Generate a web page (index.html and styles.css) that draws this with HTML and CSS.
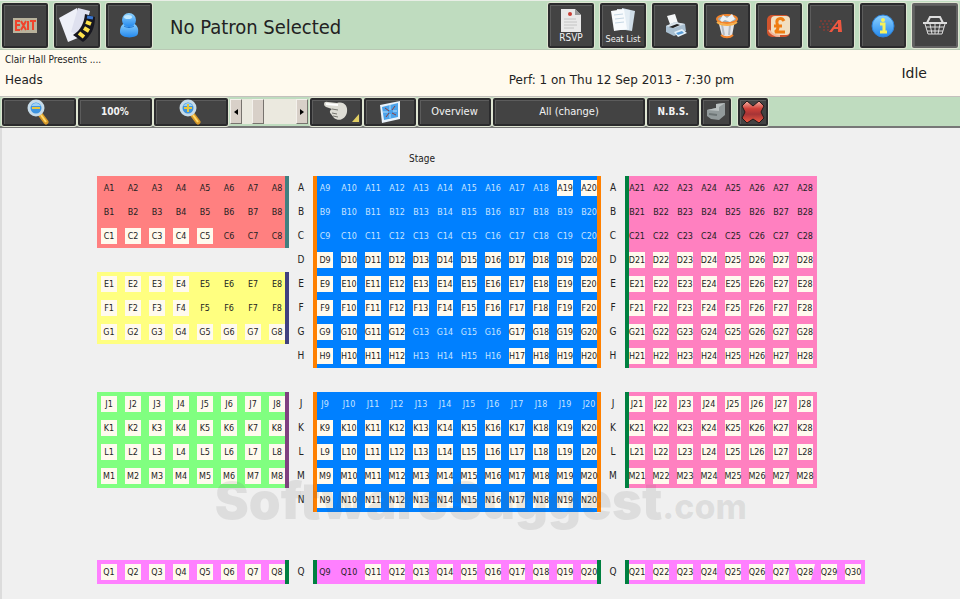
FILE: index.html
```html
<!DOCTYPE html>
<html lang="en">
<head>
    <meta charset="UTF-8">
    <title>Box Office - Seat Plan</title>
    <meta name="viewport" content="width=device-width, initial-scale=1.0">
    <link rel="stylesheet" href="styles.css">
</head>
<body>
    <header class="topbar">
        <button class="btn big" aria-label="Exit">
            <svg width="26" height="18" viewBox="0 0 26 18"><rect x="1" y="1" width="24" height="15" fill="#b9b39c"/><path d="M3 4h5M4 4v9h4M4 8h4M9 4l5 9M14 4l-5 9M16 4v9M18 4h6M21 4v9" stroke="#f0442c" stroke-width="2" fill="none"/></svg>
        </button>
        <button class="btn big" aria-label="Events">
            <svg width="40" height="38" viewBox="0 0 40 38"><path d="M2 11L20 1l8 27-17 7z" fill="#eef0f8"/><path d="M21 1l12 3-7 25-12-4z" fill="#dfe1ef"/><path d="M28 7l10 3c0 11-4 19-12 25l-10-7c8-5 11-12 12-21z" fill="#171720"/><path d="M30 10l6 1" stroke="#3975cf" stroke-width="3"/><path d="M29 15l5 2M27 21l5 3M22 26l5 4" stroke="#ffe34b" stroke-width="4"/></svg>
        </button>
        <button class="btn big" aria-label="Patron">
            <svg width="22" height="28" viewBox="0 0 22 28"><defs><linearGradient id="blue" x2="0" y2="1"><stop stop-color="#8ed3ff"/><stop offset="1" stop-color="#2388ed"/></linearGradient></defs><path d="M2 20c0-5 2-8 5-9h8c4 2 6 5 5 10 0 6-18 6-18-1z" fill="url(#blue)"/><circle cx="11" cy="8" r="7" fill="url(#blue)"/><path d="M6 14c3 2 7 2 10 0" stroke="#1c72d0" fill="none"/><ellipse cx="10" cy="5" rx="4" ry="2" fill="#c0e8ff"/></svg>
        </button>
        <h1 class="patron">No Patron Selected</h1>
        <button class="btn big labelled">
            <svg width="22" height="24" viewBox="0 0 22 24"><path d="M1 1h14l6 6v17H1z" fill="#e9e9e9"/><path d="M15 1v6h6z" fill="#999"/><path d="M4 11h12M4 14h13M4 17h13M4 20h10" stroke="#c4c4c4"/><circle cx="10" cy="6" r="2" fill="#c93e35"/></svg>
            <span>RSVP</span>
        </button>
        <button class="btn big labelled small-text">
            <svg width="28" height="26" viewBox="0 0 28 26"><path d="M13 1l13 3-3 20-13-2z" fill="#cfdde8"/><path d="M8 2l13 1-1 20H7z" fill="#e3edf4"/><path d="M2 4l13-2 3 20-13 2z" fill="#f8fbfd"/><path d="M5 8l9-1M6 12l9-1M6 16l9-1" stroke="#c5d7e4"/></svg>
            <span>Seat List</span>
        </button>
        <button class="btn big" aria-label="Print">
            <svg width="26" height="26" viewBox="0 0 26 26"><path d="M5 3l8-2 3 9-7 4z" fill="#f5f7f8"/><path d="M4 13l9-4 10 2 1 7-12 5-8-4z" fill="#a9bfd0"/><path d="M4 13l9-4 10 2-11 4z" fill="#d9e3ea"/><path d="M7 14l8-3 3 1-7 3z" fill="#222"/><path d="M12 19l8-3 5 4-9 4z" fill="#e5f2fa"/><path d="M14 20l6-2 2 2-6 2z" fill="#5a9cd6"/></svg>
        </button>
        <button class="btn big" aria-label="Waste bin">
            <svg width="24" height="26" viewBox="0 0 24 26"><path d="M3 7h17l-3 16q-5 3-10 0z" fill="#e4e6ea"/><path d="M7 12l2 10M15 12l-1 10" stroke="#b4bbc3" stroke-width="2"/><ellipse cx="12" cy="6" rx="10" ry="4" fill="#9fb0ba" stroke="#f2842c" stroke-width="2"/><path d="M5 7l3-5 4 3 5-4 3 5-5 3-5-2-3 2z" fill="#edf1f4"/><path d="M2 9c5 4 15 4 20 0" fill="none" stroke="#f8b04a" stroke-width="2"/><path d="M6 22c3 3 9 3 12 0" fill="none" stroke="#f2842c" stroke-width="2"/></svg>
        </button>
        <button class="btn big" aria-label="Payment">
            <svg width="26" height="26" viewBox="0 0 26 26"><rect x="1" y="2" width="23" height="22" rx="5" fill="#d2542c"/><rect x="5" y="3" width="19" height="19" rx="4" fill="#f1dfc0"/><path d="M3 17c2 4 6 6 11 6" fill="none" stroke="#f0b79b" stroke-width="2"/><path d="M18 8c-2-4-8-3-7 2l1 4c0 3-1 4-3 5h10M8 13h8" fill="none" stroke="#ef7d10" stroke-width="3"/></svg>
        </button>
        <button class="btn big" aria-label="Allocate">
            <svg width="26" height="18" viewBox="0 0 26 18"><path d="M11 15L20 3h3l1 12h-4v-3h-4l-2 3zM17 10h3V6z" fill="#ee5740" fill-rule="evenodd"/><path d="M2 4h15M4 7h11M1 10h12M5 13h6" stroke="#a7382e" stroke-dasharray="2 2"/></svg>
        </button>
        <button class="btn big" aria-label="Information">
            <svg width="24" height="24" viewBox="0 0 24 24"><circle cx="12" cy="12" r="11" fill="url(#blue)" stroke="#2e83d8"/><circle cx="12" cy="6" r="2" fill="#f7f15b"/><path d="M9 10h4v8M9 18h7" stroke="#f7f15b" stroke-width="3" fill="none"/></svg>
        </button>
        <button class="btn big raised" aria-label="Basket">
            <svg width="28" height="22" viewBox="0 0 28 22"><path d="M6 8l3-6h10l3 6" fill="none" stroke="#ddd" stroke-width="2"/><path d="M2 8h24" stroke="#ddd" stroke-width="2"/><path d="M4 9l3 10h14l3-10M5 12h18M6 16h16M9 9l2 10M14 9v10M19 9l-2 10" fill="none" stroke="#ddd"/></svg>
        </button>
    </header>

    <section class="info">
        <div class="event">
            <div class="presents">Clair Hall Presents ....</div>
            <div>Heads</div>
        </div>
        <div class="perf">Perf: 1 on Thu 12 Sep 2013 - 7:30 pm</div>
        <div class="status">Idle</div>
    </section>

    <nav class="toolbar">
        <button class="btn zoom" aria-label="Zoom out">
            <svg width="26" height="26" viewBox="0 0 26 26"><path d="M14 15l6 8" stroke="#d99a28" stroke-width="5" stroke-linecap="round"/><path d="M15 16l5 7" stroke="#ffd967" stroke-width="2"/><circle cx="10" cy="9" r="7" fill="#3e94e0" stroke="#c6dbe8" stroke-width="3"/><path d="M5 7c3-4 7-4 10 0" fill="#9dd0f5"/><path d="M6 9h8" stroke="#e6c63d" stroke-width="2"/></svg>
        </button>
        <button class="btn zoom"><span class="bold">100%</span></button>
        <button class="btn zoom" aria-label="Zoom in">
            <svg width="26" height="26" viewBox="0 0 26 26"><path d="M14 15l6 8" stroke="#d99a28" stroke-width="5" stroke-linecap="round"/><path d="M15 16l5 7" stroke="#ffd967" stroke-width="2"/><circle cx="10" cy="9" r="7" fill="#3e94e0" stroke="#c6dbe8" stroke-width="3"/><path d="M5 7c3-4 7-4 10 0" fill="#9dd0f5"/><path d="M6 9h8M10 5v8" stroke="#e6c63d" stroke-width="2"/></svg>
        </button>
        <div class="scroller">
            <button class="arrow" aria-label="Smaller"><svg width="4" height="6" viewBox="0 0 4 6"><path d="M4 0v6L0 3z"/></svg></button>
            <input type="range" min="0" max="100" value="23" aria-label="Zoom level">
            <button class="arrow" aria-label="Larger"><svg width="4" height="6" viewBox="0 0 4 6"><path d="M0 0v6l4-3z"/></svg></button>
        </div>
        <button class="btn tool" aria-label="Select seats">
            <svg width="48" height="24" viewBox="0 0 48 24"><path d="M12 4q0-3 4-2l9 1c7-2 11 3 10 9-1 7-8 10-13 6l-3-4c-2-2-1-4 1-5l-6-2q-2-1-2-3z" fill="#deddd5"/><path d="M20 9l6 1M20 13l5 1M21 16l5 1" stroke="#76756f" stroke-width="1"/><path d="M14 4l12 1" stroke="#fff" stroke-width="2"/><path d="M47 14v8h-7z" fill="#e2cf63"/></svg>
        </button>
        <button class="btn tool" aria-label="Fit to window">
            <svg width="24" height="24" viewBox="0 0 24 24"><path d="M2 5l20-4v18L4 23z" fill="#eaf3fb"/><path d="M4 7l16-4v14L6 20z" fill="#4ba2ea"/><path d="M7 8l4 3M17 6l-3 4M8 17l3-4M18 15l-4-2" stroke="#923d3b" stroke-width="1"/><path d="M12 5v5M12 14v4M5 12h5M15 11h4" stroke="#b9defa" stroke-width="1"/></svg>
        </button>
        <button class="btn overview">Overview</button>
        <button class="btn area">All (change)</button>
        <button class="btn tool"><span class="bold">N.B.S.</span></button>
        <button class="btn square" aria-label="Best seats">
            <svg width="20" height="20" viewBox="0 0 20 20"><path d="M1 8l9-2V2l9-1v12l-6 5-8-1-4-3z" fill="#929a9b"/><path d="M1 8l9-2V2l9-1-6 4v4z" fill="#bac0c0"/><path d="M3 12l8 1" stroke="#6d7576" stroke-width="2"/></svg>
        </button>
        <button class="btn square cancel" aria-label="Cancel">
            <svg width="24" height="24" viewBox="0 0 24 24"><defs><linearGradient id="red" x2="0" y2="1"><stop stop-color="#f8b4a6"/><stop offset=".35" stop-color="#cf4038"/><stop offset=".6" stop-color="#a63436"/><stop offset="1" stop-color="#f15b42"/></linearGradient></defs><path d="M6 1l6 5 6-5 5 5-3 6 3 6-5 5-6-4-6 4-5-5 3-6-3-6z" fill="url(#red)" stroke="#241818"/></svg>
        </button>
    </nav>

    <main class="plan">
        <div class="seats" id="seats">
            <div class="stage">Stage</div>
        </div>
        <div class="watermark">SoftwareSuggest<span>.com</span></div>
    </main>
    <script src="seats.js"></script>
</body>
</html>
```

FILE: styles.css
```css
body {
    background: #f0f0f0;
    color: #222;
    font-family: 'DejaVu Sans Condensed', 'DejaVu Sans', Verdana, sans-serif;
    margin: 0;
    min-height: 100vh;
    display: flex;
    flex-direction: column;
}
button {
    font-family: inherit;
    padding: 0;
    cursor: pointer;
}
svg {
    display: block;
}

/* header */
.topbar {
    display: flex;
    align-items: flex-start;
    gap: 6px;
    height: 46px;
    padding: 2px 2px 0 2px;
    background: #bfdcbf;
    border-top: 1px solid #e8eee6;
}
.patron {
    flex: 1;
    margin: 0 0 0 12px;
    font-size: 20px;
    line-height: 48px;
    font-weight: normal;
    white-space: nowrap;
}
.btn {
    display: flex;
    align-items: center;
    justify-content: center;
    box-sizing: border-box;
    background: #434343;
    color: #f2f2f2;
    border: 2px solid #2b2b2d;
    border-radius: 2px;
    font-size: 11px;
    box-shadow: 0 0 0 1px #dfe5d2, inset 1px 1px 0 #5c5c5c;
}
.btn:active {
    background: #333;
}
.big {
    width: 46px;
    height: 45px;
    flex-shrink: 0;
}
.labelled {
    flex-direction: column;
    font-size: 10px;
    line-height: 12px;
}
.small-text {
    font-size: 9px;
}
.raised {
    border-color: #626262;
}

/* performance details */
.info {
    display: grid;
    grid-template-columns: 53% auto 1fr;
    height: 46px;
    background: #fffaee;
    border-top: 1px solid #b9c9b4;
    border-bottom: 1px solid #c4c0bd;
    font-family: 'DejaVu Sans', Verdana, sans-serif;
    font-size: 12px;
    line-height: 20px;
}
.event {
    padding-left: 5px;
}
.presents {
    font-family: 'DejaVu Sans Condensed', 'DejaVu Sans', sans-serif;
    font-size: 10px;
}
.perf {
    padding-top: 20px;
}
.status {
    text-align: right;
    font-size: 14px;
    line-height: 46px;
    padding-right: 33px;
}

/* tools */
.toolbar {
    display: flex;
    align-items: center;
    gap: 2px;
    height: 29px;
    padding: 0 2px;
    background: #bfdcbf;
    border-bottom: 2px solid #777;
}
.toolbar .btn {
    height: 28px;
    flex-shrink: 0;
}
.zoom {
    width: 74px;
}
.tool {
    width: 52px;
}
.overview {
    width: 73px;
}
.area {
    width: 152px;
}
.toolbar .square {
    width: 30px;
}
.toolbar .cancel {
    margin-left: 5px;
}
.bold {
    font-weight: bold;
    font-size: 10px;
}
.scroller {
    display: flex;
    width: 78px;
    height: 25px;
    flex-shrink: 0;
    background: #ebe9df;
}
.arrow {
    display: flex;
    align-items: center;
    justify-content: center;
    width: 12px;
    background: #d8d0c8;
    border: 1px solid #77736e;
    border-top-color: #f4f1ec;
    border-left-color: #f4f1ec;
}
.scroller input {
    appearance: none;
    flex: 1;
    min-width: 0;
    margin: 0;
    background: transparent;
}
.scroller input::-webkit-slider-thumb {
    appearance: none;
    width: 12px;
    height: 25px;
    background: #d8d0c8;
    border: 1px solid #77736e;
    border-top-color: #f4f1ec;
    border-left-color: #f4f1ec;
}

/* seating plan */
.plan {
    position: relative;
    flex: 1;
    border-left: 2px solid #dcdcdc;
    padding-top: 24px;
}
.seats {
    display: grid;
    grid-template-columns: repeat(32, 24px);
    grid-auto-rows: 24px;
    justify-content: center;
}
.stage {
    grid-area: 1 / 14 / 2 / 17;
    font-size: 10px;
    line-height: 14px;
}
.row-name {
    font-size: 10px;
    line-height: 24px;
    text-align: center;
}
.block {
    display: grid;
    grid-template-columns: repeat(auto-fill, 24px);
    grid-auto-rows: 24px;
    place-items: center;
    background: var(--fill);
    box-shadow: inset var(--left) 0 0 var(--edge), inset var(--right) 0 0 var(--edge);
    --left: 0px;
    --right: 0px;
}
.edge-left {
    --left: 4px;
}
.edge-right {
    --right: -4px;
}
.red { --fill: #ff8080; --edge: #408080; }
.yellow { --fill: #ffff80; --edge: #404080; }
.green { --fill: #80ff80; --edge: #804080; }
.blue { --fill: #0080ff; --edge: #ff8000; }
.pink { --fill: #ff80c0; --edge: #008040; }
.violet { --fill: #ff80ff; --edge: #008040; }
.seat {
    display: flex;
    align-items: center;
    justify-content: center;
    width: 16px;
    height: 16px;
    border: none;
    background: #fffaee;
    color: #222;
    font-family: 'DejaVu Sans', Verdana, sans-serif;
    font-size: 8px;
    white-space: nowrap;
}
.seat.sold {
    background: none;
}
.blue .seat.sold {
    color: #c8e4ff;
}
.seat.restricted {
    width: 20px;
    clip-path: polygon(0 0, 100% 0, 80% 100%, 20% 100%);
}
.watermark {
    position: absolute;
    left: 0;
    right: 0;
    top: 343px;
    text-align: center;
    font-family: Inter, sans-serif;
    font-size: 51px;
    line-height: 60px;
    font-weight: 900;
    color: rgba(90, 90, 90, 0.12);
    pointer-events: none;
}
.watermark span {
    font-size: 34px;
    font-weight: 800;
}
```

FILE: seats.js
```javascript
// first grid row is the stage, row I is an empty gangway
const gridRows = { A: 2, B: 3, C: 4, D: 5, E: 6, F: 7, G: 8, H: 9, J: 11, K: 12, L: 13, M: 14, N: 15, Q: 18 };

const blocks = [
    { cls: 'red edge-right', col: 1, rows: 'ABC', from: 1, to: 8, sold: { A: [1, 8], B: [1, 8], C: [6, 8] } },
    { cls: 'yellow edge-right', col: 1, rows: 'EFG', from: 1, to: 8, sold: { E: [5, 8], F: [5, 8] } },
    { cls: 'green edge-right', col: 1, rows: 'JKLM', from: 1, to: 8, sold: {} },
    { cls: 'violet edge-right', col: 1, rows: 'Q', from: 1, to: 8, sold: {} },
    { cls: 'blue edge-left edge-right', col: 10, rows: 'ABCDEFGH', from: 9, to: 20, sold: { A: [9, 18], B: [9, 20], C: [9, 20], G: [13, 16], H: [13, 16] } },
    { cls: 'blue edge-left edge-right', col: 10, rows: 'JKLMN', from: 9, to: 20, sold: { J: [9, 20] } },
    { cls: 'violet edge-left edge-right', col: 10, rows: 'Q', from: 9, to: 20, sold: { Q: [9, 10] } },
    { cls: 'pink edge-left', col: 23, rows: 'ABCDEFGH', from: 21, to: 28, sold: { A: [21, 28], B: [21, 28], C: [21, 28] } },
    { cls: 'pink edge-left', col: 23, rows: 'JKLM', from: 21, to: 28, sold: {} },
    { cls: 'violet edge-left', col: 23, rows: 'Q', from: 21, to: 30, sold: {} }
];
const restricted = ['Q28'];

const plan = document.getElementById('seats');

blocks.forEach(b => {
    const block = document.createElement('div');
    block.className = 'block ' + b.cls;
    block.style.gridArea = `${gridRows[b.rows[0]]} / ${b.col} / span ${b.rows.length} / span ${b.to - b.from + 1}`;
    for (const row of b.rows) {
        const sold = b.sold[row];
        for (let n = b.from; n <= b.to; n++) {
            const seat = document.createElement('button');
            seat.className = 'seat';
            seat.textContent = row + n;
            if (sold && n >= sold[0] && n <= sold[1]) seat.classList.add('sold');
            if (restricted.includes(row + n)) seat.classList.add('restricted');
            block.appendChild(seat);
        }
    }
    plan.appendChild(block);
});

function rowNames(rows, col) {
    for (const row of rows) {
        const name = document.createElement('div');
        name.className = 'row-name';
        name.textContent = row;
        name.style.gridArea = `${gridRows[row]} / ${col}`;
        plan.appendChild(name);
    }
}
rowNames('ABCDEFGHJKLMNQ', 9);
rowNames('ABCDEFGHJKLMQ', 22);
```
